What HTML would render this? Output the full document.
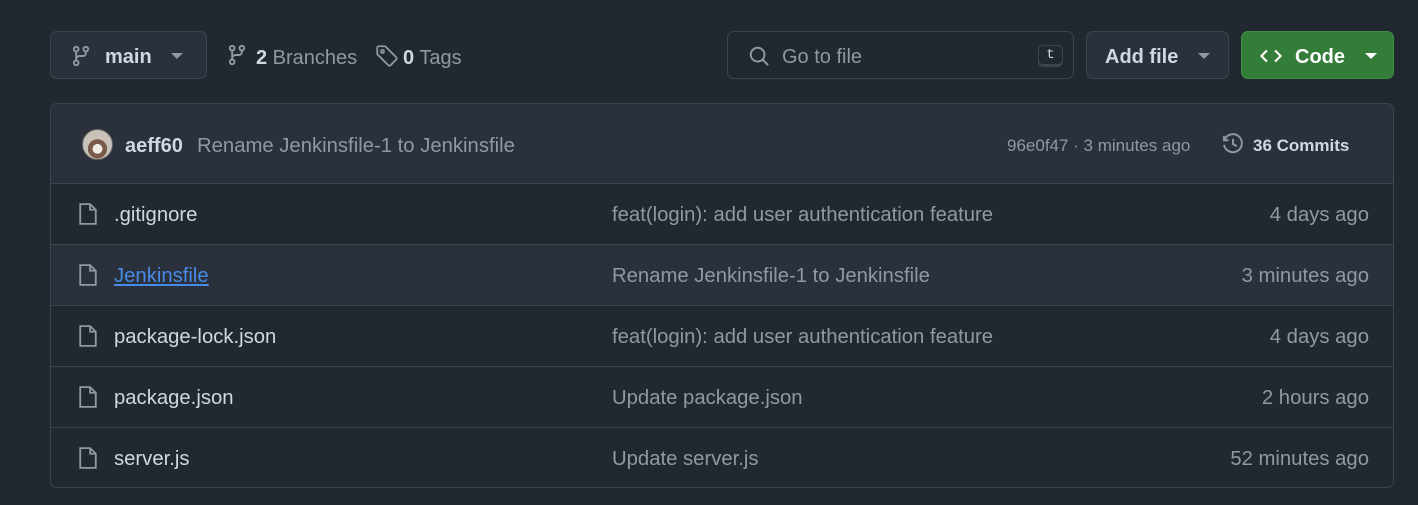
<!DOCTYPE html>
<html><head><meta charset="utf-8"><style>
*{box-sizing:border-box;margin:0;padding:0}
body{width:1418px;height:505px;background:#212830;font-family:"Liberation Sans",sans-serif;color:#d1d7e0;position:relative;overflow:hidden;font-size:20px}
.abs{position:absolute}
.btn{position:absolute;top:31px;height:48px;border:1px solid #3d444d;border-radius:7px;background:#2a313c;display:flex;align-items:center}
svg{display:block}
.muted{color:#9198a1}
.table{position:absolute;left:50px;top:103px;width:1344px;height:385px;border:1px solid #3d444d;border-radius:7px;overflow:hidden}
.hdr{height:80px;background:#2a313c;border-bottom:1px solid #3d444d;position:relative}
.row{height:61px;border-top:1px solid #3d444d;position:relative;display:flex;align-items:center;padding-top:3px}
.row .ic{position:absolute;left:27px;top:18px}
.row .nm{position:absolute;left:63px;font-size:20.3px}
.row .msg{position:absolute;left:561px;color:#9198a1;font-size:20.3px}
.row .dt{position:absolute;right:24px;color:#9198a1;font-size:20.3px}
</style></head><body>
<div class="btn" style="left:50px;width:157px">
 <svg class="abs" style="left:19px;top:12px" width="22" height="24" viewBox="0 0 16 16" fill="none" stroke="#9198a1" stroke-width="1.4"><circle cx="4.5" cy="3" r="1.7"/><circle cx="4.5" cy="13" r="1.7"/><circle cx="11.5" cy="3" r="1.7"/><path d="M4.5 4.7v6.6M11.5 4.7v1.3a2 2 0 0 1-2 2H7a2.5 2.5 0 0 0-2.5 2.5"/></svg>
 <span class="abs" style="left:54px;top:14px;font-weight:bold;color:#d1d7e0">main</span>
 <span class="abs" style="left:120px;top:21px;border-left:6px solid transparent;border-right:6px solid transparent;border-top:6px solid #9198a1"></span>
</div>
<svg class="abs" style="left:226px;top:43px" width="22" height="24" viewBox="0 0 16 16" fill="none" stroke="#9198a1" stroke-width="1.4"><circle cx="4.5" cy="3" r="1.7"/><circle cx="4.5" cy="13" r="1.7"/><circle cx="11.5" cy="3" r="1.7"/><path d="M4.5 4.7v6.6M11.5 4.7v1.3a2 2 0 0 1-2 2H7a2.5 2.5 0 0 0-2.5 2.5"/></svg>
<span class="abs muted" style="left:256px;top:47px"><b style="color:#d1d7e0">2</b> Branches</span>
<svg class="abs" style="left:375px;top:44px" width="24" height="24" viewBox="0 0 16 16" fill="none" stroke="#9198a1" stroke-width="1.2"><path d="M1.5 2.5v4.3l7.4 7.4a1 1 0 0 0 1.4 0l3.9-3.9a1 1 0 0 0 0-1.4L6.8 1.5H2.5a1 1 0 0 0-1 1z"/><circle cx="5" cy="5" r="1"/></svg>
<span class="abs muted" style="left:403px;top:47px"><b style="color:#d1d7e0">0</b> Tags</span>

<div class="btn" style="left:727px;width:347px;background:#212830">
 <svg class="abs" style="left:20px;top:13px" width="22" height="22" viewBox="0 0 16 16" fill="none" stroke="#9198a1" stroke-width="1.4"><circle cx="7" cy="7" r="5"/><path d="M10.6 10.6l4 4"/></svg>
 <span class="abs muted" style="left:54px;top:14px">Go to file</span>
 <span class="abs" style="left:310px;top:13px;width:25px;height:22px;border:1px solid #3d444d;border-radius:5px;font-size:14px;text-align:center;line-height:19px;font-family:'Liberation Mono',monospace;color:#d1d7e0;box-shadow:inset 0 -2px 0 #3d444d">t</span>
</div>
<div class="btn" style="left:1086px;width:143px">
 <span class="abs" style="left:18px;top:14px;font-weight:bold;color:#d1d7e0">Add file</span>
 <span class="abs" style="left:111px;top:21px;border-left:6px solid transparent;border-right:6px solid transparent;border-top:6px solid #9198a1"></span>
</div>
<div class="btn" style="left:1241px;width:153px;background:#347d39;border-color:#3f8f44">
 <svg class="abs" style="left:17px;top:13px" width="24" height="22" viewBox="0 0 16 16" fill="none" stroke="#fff" stroke-width="1.5"><path d="M5 4L1 8l4 4M11 4l4 4-4 4"/></svg>
 <span class="abs" style="left:53px;top:14px;font-weight:bold;color:#fff">Code</span>
 <span class="abs" style="left:123px;top:21px;border-left:6px solid transparent;border-right:6px solid transparent;border-top:6px solid #fff"></span>
</div>

<div class="table">
 <div class="hdr">
  <div class="abs" style="left:31px;top:25px;width:31px;height:31px;border-radius:50%;background:radial-gradient(circle at 50% 65%,#f0ece6 0 20%,#7a5a48 21% 40%,#c9c2b8 41%);border:1px solid #666"></div>
  <span class="abs" style="left:74px;top:31px;font-weight:bold;color:#d1d7e0">aeff60</span>
  <span class="abs muted" style="left:146px;top:31px;font-size:20.3px">Rename Jenkinsfile-1 to Jenkinsfile</span>
  <span class="abs muted" style="left:956px;top:32px;font-size:17px">96e0f47 · 3 minutes ago</span>
  <svg class="abs" style="left:1170px;top:28px" width="24" height="24" viewBox="0 0 16 16" fill="none" stroke="#9198a1" stroke-width="1.3"><path d="M2 2.5v3h3"/><path d="M2.3 5.3A6 6 0 1 1 2 8.5"/><path d="M8 4.5V8l2.5 1.5"/></svg>
  <span class="abs" style="left:1202px;top:32px;font-size:17px;font-weight:bold;color:#d1d7e0">36 Commits</span>
 </div>
</div>
<div class="abs" style="left:51px;top:184px;width:1342px">
 <div class="row" style="border-top:none;height:60px"><svg class="ic" width="20" height="24" viewBox="0 0 14 17" fill="none" stroke="#9198a1" stroke-width="1.3"><path d="M1.5 1.5h7l4 4v10h-11z M8.5 1.5v4h4"/></svg><span class="nm">.gitignore</span><span class="msg">feat(login): add user authentication feature</span><span class="dt">4 days ago</span></div>
 <div class="row" style="background:#2a313c"><svg class="ic" width="20" height="24" viewBox="0 0 14 17" fill="none" stroke="#9198a1" stroke-width="1.3"><path d="M1.5 1.5h7l4 4v10h-11z M8.5 1.5v4h4"/></svg><span class="nm" style="color:#478be6;text-decoration:underline">Jenkinsfile</span><span class="msg">Rename Jenkinsfile-1 to Jenkinsfile</span><span class="dt">3 minutes ago</span></div>
 <div class="row"><svg class="ic" width="20" height="24" viewBox="0 0 14 17" fill="none" stroke="#9198a1" stroke-width="1.3"><path d="M1.5 1.5h7l4 4v10h-11z M8.5 1.5v4h4"/></svg><span class="nm">package-lock.json</span><span class="msg">feat(login): add user authentication feature</span><span class="dt">4 days ago</span></div>
 <div class="row"><svg class="ic" width="20" height="24" viewBox="0 0 14 17" fill="none" stroke="#9198a1" stroke-width="1.3"><path d="M1.5 1.5h7l4 4v10h-11z M8.5 1.5v4h4"/></svg><span class="nm">package.json</span><span class="msg">Update package.json</span><span class="dt">2 hours ago</span></div>
 <div class="row"><svg class="ic" width="20" height="24" viewBox="0 0 14 17" fill="none" stroke="#9198a1" stroke-width="1.3"><path d="M1.5 1.5h7l4 4v10h-11z M8.5 1.5v4h4"/></svg><span class="nm">server.js</span><span class="msg">Update server.js</span><span class="dt">52 minutes ago</span></div>
</div>
</body></html>
